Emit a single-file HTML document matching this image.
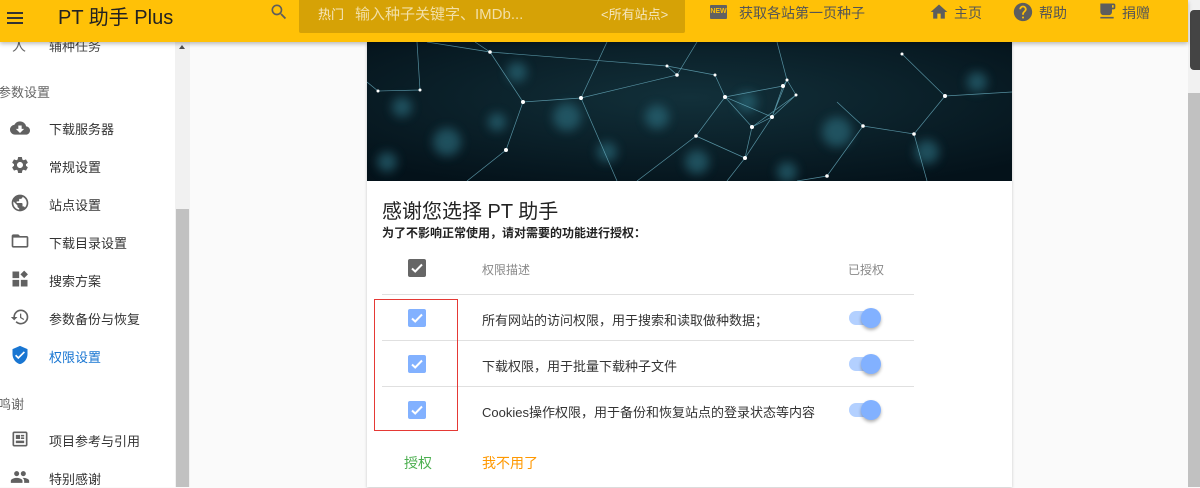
<!DOCTYPE html>
<html><head><meta charset="utf-8"><style>
*{margin:0;padding:0;box-sizing:border-box}
body{width:1200px;height:487px;overflow:hidden;background:#fafafa;font-family:"Liberation Sans","Noto Sans CJK SC",sans-serif;position:relative;color:#333}
.abs{position:absolute}
.hdr{left:0;top:0;width:1188px;height:42px;background:#ffc107;box-shadow:0 2px 4px rgba(0,0,0,.25);z-index:5}
.side{left:0;top:0;width:175px;height:487px;background:#fff}
.sb{left:175px;top:42px;width:15px;height:445px;background:#f1f1f1}
.sbt{left:176px;top:209px;width:13px;height:278px;background:#c1c1c1}
.it{position:absolute;left:49px;font-size:13px;color:#333}
.ic{position:absolute;left:10px;width:20px;height:20px}
.sec{position:absolute;left:-2px;font-size:13px;color:#666}
.card{left:367px;top:42px;width:645px;height:445px;background:#fff;box-shadow:0 1px 3px rgba(0,0,0,.2)}
.row{position:absolute;left:15px;width:532px;border-top:1px solid #e0e0e0}
.cb{position:absolute;left:41px;width:18px;height:18px;border-radius:2px;background:#82b1ff}
.cb svg{position:absolute;left:0;top:0}
.tog{position:absolute;left:482px;width:30px;height:14px;border-radius:7px;background:#b3d0ff}
.tog:after{content:"";position:absolute;left:12px;top:-3px;width:20px;height:20px;border-radius:50%;background:#82b1ff;box-shadow:0 2px 3px rgba(0,0,0,.3)}
.td{position:absolute;left:115px;font-size:13px;color:#333}
</style></head><body>
<div class="abs side">
  <div class="ic" style="top:36px;left:12px;color:#666;font-size:14px">人</div>
  <div class="it" style="top:36px;color:#444">辅种任务</div>
  <div class="sec" style="top:82px">参数设置</div>
  <svg class="ic" style="top:118px" viewBox="0 0 24 24"><path fill="#616161" d="M19.35 10.04A7.490 7.490 0 0 0 12 4C9.110 4 6.600 5.640 5.350 8.040A5.994 5.994 0 0 0 0 14c0 3.310 2.690 6 6 6h13c2.760 0 5-2.240 5-5 0-2.640-2.050-4.780-4.650-4.960zM17 13l-5 5-5-5h3V9h4v4h3z"/></svg>
  <div class="it" style="top:119px">下载服务器</div>
  <svg class="ic" style="top:155px" viewBox="0 0 24 24"><path fill="#616161" d="M19.14 12.94c.04-.3.06-.61.06-.94 0-.32-.02-.64-.07-.94l2.030-1.580a.49.49 0 0 0 .12-.61l-1.920-3.320a.488.488 0 0 0-.59-.22l-2.390.96c-.5-.38-1.030-.7-1.620-.94l-.36-2.540a.484.484 0 0 0-.48-.41h-3.840c-.24 0-.43.17-.47.41l-.36 2.540c-.59.24-1.130.57-1.620.94l-2.390-.96a.49.49 0 0 0-.59.22L2.740 8.870c-.12.21-.08.47.12.61l2.030 1.580c-.05.3-.09.63-.09.94s.02.64.07.94l-2.030 1.580a.49.49 0 0 0-.12.61l1.920 3.320c.12.22.37.29.59.22l2.390-.96c.5.38 1.030.7 1.620.94l.36 2.540c.05.24.24.41.48.41h3.840c.24 0 .44-.17.47-.41l.36-2.540c.59-.24 1.130-.56 1.620-.94l2.390.96c.22.08.47 0 .59-.22l1.920-3.320c.12-.22.07-.47-.12-.61l-2.010-1.580zM12 15.6c-1.980 0-3.600-1.620-3.600-3.600s1.620-3.600 3.600-3.600 3.600 1.620 3.600 3.600-1.620 3.600-3.600 3.600z"/></svg>
  <div class="it" style="top:157px">常规设置</div>
  <svg class="ic" style="top:193px" viewBox="0 0 24 24"><path fill="#616161" d="M12 2C6.480 2 2 6.480 2 12s4.480 10 10 10 10-4.480 10-10S17.520 2 12 2zm-1 17.930c-3.950-.49-7-3.850-7-7.930 0-.62.08-1.210.21-1.790L9 15v1c0 1.100.9 2 2 2v1.930zm6.900-2.540c-.26-.81-1-1.390-1.900-1.390h-1v-3c0-.55-.45-1-1-1H8v-2h2c.55 0 1-.45 1-1V7h2c1.100 0 2-.9 2-2v-.41c2.930 1.190 5 4.060 5 7.410 0 2.080-.8 3.970-2.100 5.390z"/></svg>
  <div class="it" style="top:195px">站点设置</div>
  <svg class="ic" style="top:231px" viewBox="0 0 24 24"><path fill="#616161" d="M20 6h-8l-2-2H4c-1.100 0-2 .9-2 2v12c0 1.100.9 2 2 2h16c1.100 0 2-.9 2-2V8c0-1.100-.9-2-2-2zm0 12H4V8h16v10z"/></svg>
  <div class="it" style="top:233px">下载目录设置</div>
  <svg class="ic" style="top:269px" viewBox="0 0 24 24"><path fill="#616161" d="M3 3h8v8H3zM3 13h8v8H3zM13 13h8v8h-8zM17 2l4.500 4.500L17 11l-4.500-4.500z"/></svg>
  <div class="it" style="top:271px">搜索方案</div>
  <svg class="ic" style="top:307px" viewBox="0 0 24 24"><path fill="#616161" d="M13 3a9 9 0 0 0-9 9H1l3.890 3.890.07.14L9 12H6c0-3.870 3.130-7 7-7s7 3.130 7 7-3.130 7-7 7c-1.930 0-3.680-.79-4.940-2.060l-1.420 1.420A8.954 8.954 0 0 0 13 21a9 9 0 0 0 0-18zm-1 5v5l4.280 2.540.72-1.210-3.500-2.080V8H12z"/></svg>
  <div class="it" style="top:309px">参数备份与恢复</div>
  <svg class="ic" style="top:345px" viewBox="0 0 24 24"><path fill="#1976d2" d="M12 1L3 5v6c0 5.550 3.840 10.740 9 12 5.160-1.260 9-6.450 9-12V5l-9-4zm-2 16l-4-4 1.410-1.410L10 14.170l6.590-6.590L18 9l-8 8z"/></svg>
  <div class="it" style="top:347px;color:#1976d2">权限设置</div>
  <div class="sec" style="top:394px">鸣谢</div>
  <svg class="ic" style="top:429px" viewBox="0 0 24 24"><path fill="#616161" d="M19 3H5c-1.100 0-2 .9-2 2v14c0 1.100.9 2 2 2h14c1.100 0 2-.9 2-2V5c0-1.100-.9-2-2-2zm0 16H5V5h14zM7 7h5v5H7zm6 0h4v2h-4zm0 3h4v2h-4zm-6 4h10v3H7z"/></svg>
  <div class="it" style="top:431px">项目参考与引用</div>
  <svg class="ic" style="top:467px" viewBox="0 0 24 24"><path fill="#616161" d="M16 11c1.660 0 2.990-1.340 2.990-3S17.660 5 16 5c-1.660 0-3 1.340-3 3s1.340 3 3 3zm-8 0c1.660 0 2.990-1.340 2.990-3S9.660 5 8 5C6.340 5 5 6.340 5 8s1.340 3 3 3zm0 2c-2.330 0-7 1.170-7 3.500V19h14v-2.500c0-2.330-4.670-3.500-7-3.500zm8 0c-.29 0-.62.02-.97.05 1.160.84 1.970 1.970 1.970 3.450V19h6v-2.500c0-2.330-4.670-3.500-7-3.500z"/></svg>
  <div class="it" style="top:469px">特别感谢</div>
</div>
<div class="abs sb"></div><div class="abs sbt"></div>
<div class="abs" style="left:179px;top:45px;width:0;height:0;border:3px solid transparent;border-bottom:4px solid #505050;border-top:0"></div>
<div class="abs" style="left:1188px;top:0;width:12px;height:487px;background:#f1f1f1"></div>
<div class="abs" style="left:1188px;top:93px;width:12px;height:394px;background:#c1c1c1"></div>
<div class="abs" style="left:1190px;top:10px;width:10px;height:60px;background:#444;border-radius:4px 0 0 4px"></div>

<div class="abs hdr">
  <div class="abs" style="left:7px;top:12px;width:16px;height:2px;background:#333;box-shadow:0 5px 0 #333,0 10px 0 #333"></div>
  <div class="abs" style="left:58px;top:1px;font-size:20px;color:#222">PT 助手 Plus</div>
  <svg class="abs" style="left:269px;top:2px" width="20" height="20" viewBox="0 0 24 24"><path fill="#5d5d5d" d="M15.5 14h-.79l-.28-.27A6.471 6.471 0 0 0 16 9.500 6.500 6.500 0 1 0 9.500 16c1.610 0 3.090-.59 4.230-1.570l.27.28v.79l5 4.990L20.490 19l-4.990-5zm-6 0C7.010 14 5 11.990 5 9.500S7.010 5 9.500 5 14 7.010 14 9.500 11.990 14 9.500 14z"/></svg>
  <div class="abs" style="left:299px;top:0;width:386px;height:33px;background:#d6a206;border-radius:0 0 2px 2px"></div>
  <div class="abs" style="left:318px;top:4px;font-size:13px;color:#f5e7c0">热门</div>
  <div class="abs" style="left:355px;top:3px;font-size:15px;color:#f2dfa6">输入种子关键字、IMDb...</div>
  <div class="abs" style="left:601px;top:4px;font-size:13px;color:#f5e7c0">&lt;所有站点&gt;</div>
  <div class="abs" style="left:710px;top:5px;width:17px;height:14px;background:#616161;border-radius:1px;color:#ffc107;font-size:7px;font-weight:bold;line-height:14px;text-align:center">NEW</div>
  <div class="abs" style="left:739px;top:3px;font-size:14px;color:#555">获取各站第一页种子</div>
  <svg class="abs" style="left:929px;top:2px" width="20" height="20" viewBox="0 0 24 24"><path fill="#5d5d5d" d="M10 20v-6h4v6h5v-8h3L12 3 2 12h3v8z"/></svg>
  <div class="abs" style="left:954px;top:3px;font-size:14px;color:#555">主页</div>
  <svg class="abs" style="left:1012px;top:1px" width="22" height="22" viewBox="0 0 24 24"><path fill="#5d5d5d" d="M12 2C6.480 2 2 6.480 2 12s4.480 10 10 10 10-4.480 10-10S17.520 2 12 2zm1 17h-2v-2h2v2zm2.070-7.750l-.9.92C13.450 12.900 13 13.500 13 15h-2v-.5c0-1.100.45-2.100 1.170-2.830l1.240-1.260c.37-.36.59-.86.59-1.410 0-1.100-.9-2-2-2s-2 .9-2 2H8c0-2.210 1.790-4 4-4s4 1.790 4 4c0 .88-.36 1.680-.93 2.250z"/></svg>
  <div class="abs" style="left:1039px;top:3px;font-size:14px;color:#555">帮助</div>
  <svg class="abs" style="left:1097px;top:1px" width="20" height="20" viewBox="0 0 24 24"><path fill="#5d5d5d" d="M20 3H4v10c0 2.210 1.790 4 4 4h6c2.210 0 4-1.790 4-4v-3h2a2 2 0 0 0 2-2V5c0-1.110-.89-2-2-2zm0 5h-2V5h2v3zM4 19h16v2H4z"/></svg>
  <div class="abs" style="left:1122px;top:3px;font-size:14px;color:#555">捐赠</div>
</div>

<div class="abs card">
  <svg class="abs" style="left:0;top:0" width="645" height="139" viewBox="0 0 645 139">
    <defs><radialGradient id="g" cx="50%" cy="40%" r="70%"><stop offset="0" stop-color="#12303a"/><stop offset="1" stop-color="#04121a"/></radialGradient>
    <filter id="b"><feGaussianBlur stdDeviation="5"/></filter></defs>
    <rect width="645" height="139" fill="url(#g)"/>
    <g fill="#2f7384" opacity=".6" filter="url(#b)">
      <circle cx="35" cy="65" r="10"/><circle cx="80" cy="100" r="14"/><circle cx="130" cy="80" r="9"/><circle cx="200" cy="75" r="14"/><circle cx="290" cy="75" r="12"/><circle cx="330" cy="120" r="12"/><circle cx="380" cy="60" r="10"/><circle cx="470" cy="90" r="15"/><circle cx="560" cy="110" r="12"/><circle cx="610" cy="40" r="10"/><circle cx="240" cy="110" r="10"/><circle cx="150" cy="30" r="10"/><circle cx="20" cy="120" r="10"/><circle cx="420" cy="130" r="10"/>
    </g>
    <g stroke="#6fb6c8" stroke-width=".7" opacity=".75" fill="none">
      <path d="M123 10L156 60L214 56L310 33L300 24L123 10M156 60L139 108L100 139M156 60L123 10L108 0M11 49L53 48M53 48L50 0M214 56L240 0M214 56L250 139M310 33L300 24L348 33L358 55L405 75L416 44L420 38L429 53L405 75L385 85L358 55M348 33L300 24M358 55L329 94L270 139M329 94L378 116L405 75M385 85L378 116L360 139M416 44L358 55M429 53L385 85M496 84L460 134L430 139M496 84L547 92L578 54L535 12M578 54L645 50M547 92L560 139M310 33L330 0M405 75L420 38L410 0M496 84L470 60M123 10L60 0M0 40L11 49"/>
    </g>
    <g fill="#fff">
      <circle cx="123" cy="10" r="1.8"/><circle cx="156" cy="60" r="2"/><circle cx="214" cy="56" r="2"/><circle cx="139" cy="108" r="2"/><circle cx="11" cy="49" r="1.5"/><circle cx="53" cy="48" r="1.5"/><circle cx="310" cy="33" r="1.8"/><circle cx="300" cy="24" r="1.5"/><circle cx="348" cy="33" r="1.5"/><circle cx="358" cy="55" r="2"/><circle cx="405" cy="75" r="2"/><circle cx="416" cy="44" r="2"/><circle cx="420" cy="38" r="1.5"/><circle cx="429" cy="53" r="1.5"/><circle cx="385" cy="85" r="2"/><circle cx="329" cy="94" r="1.8"/><circle cx="378" cy="116" r="2"/><circle cx="496" cy="84" r="1.8"/><circle cx="547" cy="92" r="1.8"/><circle cx="578" cy="54" r="2"/><circle cx="535" cy="12" r="1.5"/><circle cx="460" cy="134" r="1.8"/>
    </g>
  </svg>
  <div class="abs" style="left:15px;top:153px;font-size:20px;color:#222">感谢您选择 PT 助手</div>
  <div class="abs" style="left:15px;top:182px;font-size:12px;font-weight:bold;color:#222">为了不影响正常使用，请对需要的功能进行授权：</div>
  <div class="abs" style="left:41px;top:217px;width:18px;height:18px;border-radius:2px;background:#666"><svg width="18" height="18" viewBox="0 0 18 18"><path d="M4 9.5l3.2 3L14 5.5" stroke="#fff" stroke-width="2" fill="none"/></svg></div>
  <div class="abs" style="left:115px;top:219px;font-size:12px;color:#888">权限描述</div>
  <div class="abs" style="left:481px;top:219px;font-size:12px;color:#888">已授权</div>
  <div class="row" style="top:252px"></div>
  <div class="row" style="top:298px"></div>
  <div class="row" style="top:344px"></div>
  <div class="cb" style="top:267px"><svg width="18" height="18" viewBox="0 0 18 18"><path d="M4 9.5l3.2 3L14 5.5" stroke="#fff" stroke-width="2" fill="none"/></svg></div>
  <div class="cb" style="top:313px"><svg width="18" height="18" viewBox="0 0 18 18"><path d="M4 9.5l3.2 3L14 5.5" stroke="#fff" stroke-width="2" fill="none"/></svg></div>
  <div class="cb" style="top:359px"><svg width="18" height="18" viewBox="0 0 18 18"><path d="M4 9.5l3.2 3L14 5.5" stroke="#fff" stroke-width="2" fill="none"/></svg></div>
  <div class="td" style="top:268px">所有网站的访问权限，用于搜索和读取做种数据；</div>
  <div class="td" style="top:314px">下载权限，用于批量下载种子文件</div>
  <div class="td" style="top:360px">Cookies操作权限，用于备份和恢复站点的登录状态等内容</div>
  <div class="tog" style="top:269px"></div>
  <div class="tog" style="top:315px"></div>
  <div class="tog" style="top:361px"></div>
  <div class="abs" style="left:7px;top:257px;width:84px;height:132px;border:1px solid #e53935"></div>
  <div class="abs" style="left:37px;top:411px;font-size:14px;color:#4caf50">授权</div>
  <div class="abs" style="left:115px;top:411px;font-size:14px;color:#ff9800">我不用了</div>
</div>
</body></html>
